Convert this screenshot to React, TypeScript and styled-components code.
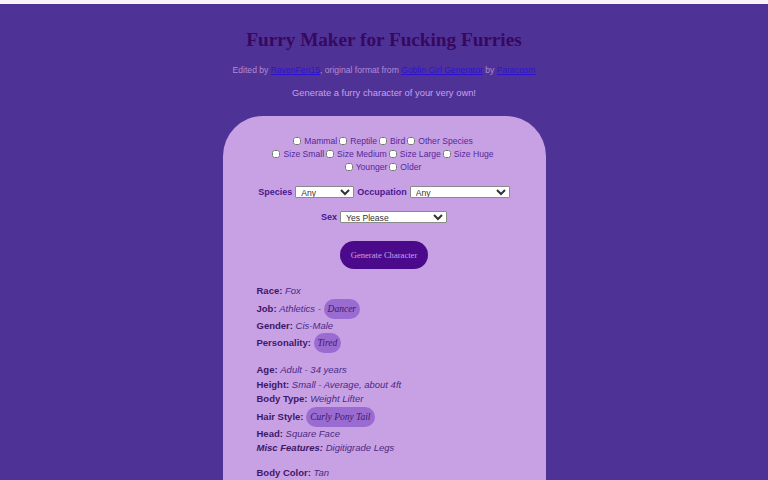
import React from "react";
import styled, { createGlobalStyle } from "styled-components";

const Global = createGlobalStyle`
  html, body { margin: 0; padding: 0; background: #4f3296; }
  body { font-family: "Liberation Sans", Arial, sans-serif; }
`;

const Page = styled.div`
  border-top: 4px solid #f8f3f8;
  background: #4f3296;
  min-height: 476px;
  display: flex;
  flex-direction: column;
  align-items: center;
`;

const Title = styled.h1`
  margin: 25px 0 0;
  font-family: "Liberation Serif", "Times New Roman", serif;
  font-size: 19.2px;
  line-height: 22px;
  font-weight: bold;
  color: #36085e;
`;

const Credits = styled.p`
  margin: 14px 0 0;
  font-size: 8.6px;
  line-height: 10px;
  color: #b08ad8;
`;

const Link = styled.a`
  color: #2c12d2;
  text-decoration: underline;
`;

const Tagline = styled.p`
  margin: 12px 0 0;
  font-size: 9.4px;
  line-height: 12px;
  color: #c7a0ea;
`;

const Card = styled.main`
  margin-top: 17px;
  width: 323px;
  background: #c8a0e4;
  border-radius: 40px 40px 0 0;
  padding: 19px 0 40px;
  box-sizing: border-box;
  display: flex;
  flex-direction: column;
  align-items: center;
`;

const CheckLine = styled.div`
  display: flex;
  align-items: center;
  justify-content: center;
  height: 12.7px;
  font-size: 8.6px;
  color: #55289a;
`;

const CheckItem = styled.label`
  display: inline-flex;
  align-items: center;
  margin-right: 2px;
`;

const Box = styled.input`
  width: 8px;
  height: 8px;
  margin: 0 3px 0 0;
`;

const SelectRow = styled.div<{ $top: number }>`
  margin-top: ${(p) => p.$top}px;
  display: flex;
  align-items: center;
  justify-content: center;
  gap: 3px;
  font-size: 9px;
`;

const SelLabel = styled.span`
  font-weight: bold;
  color: #4a1890;
`;

const Select = styled.select<{ $w: number }>`
  width: ${(p) => p.$w}px;
  height: 12px;
  font-family: "Liberation Sans", Arial, sans-serif;
  font-size: 8.6px;
  padding: 0 0 0 1px;
  border: 1px solid #8a8a8a;
  border-radius: 1px;
  background: #fff;
  color: #333;
`;

const Button = styled.button`
  margin-top: 18px;
  width: 88px;
  height: 28px;
  border: none;
  border-radius: 14px;
  background: #4b0a8c;
  color: #c8a0e4;
  font-family: "Liberation Serif", "Times New Roman", serif;
  font-size: 8.6px;
`;

const Results = styled.section`
  align-self: stretch;
  padding: 15px 34px 0;
`;

const Group = styled.div`
  & + & { margin-top: 10px; }
`;

const Line = styled.div`
  font-size: 9.5px;
  line-height: 14.5px;
  color: #4a2a86;
`;

const Label = styled.b<{ $italic?: boolean }>`
  color: #3c1868;
  font-style: ${(p) => (p.$italic ? "italic" : "normal")};
`;

const Value = styled.i``;

const Pill = styled.span`
  display: inline-block;
  vertical-align: middle;
  font-family: "Liberation Serif", "Times New Roman", serif;
  font-style: italic;
  font-size: 9.5px;
  line-height: 10px;
  padding: 5px 4px;
  border-radius: 10px;
  background: #9a6bd0;
  color: #3a1a70;
`;

const checks = [
  ["Mammal", "Reptile", "Bird", "Other Species"],
  ["Size Small", "Size Medium", "Size Large", "Size Huge"],
  ["Younger", "Older"],
];

export default function App() {
  return (
    <Page>
      <Global />
      <Title>Furry Maker for Fucking Furries</Title>
      <Credits>
        Edited by <Link href="#">RavenFen15</Link>, original format from{" "}
        <Link href="#">Goblin Girl Generator</Link> by <Link href="#">Paracosm</Link>
      </Credits>
      <Tagline>Generate a furry character of your very own!</Tagline>
      <Card>
        {checks.map((row, i) => (
          <CheckLine key={i}>
            {row.map((c) => (
              <CheckItem key={c}>
                <Box type="checkbox" />
                {c}
              </CheckItem>
            ))}
          </CheckLine>
        ))}
        <SelectRow $top={13}>
          <SelLabel>Species</SelLabel>
          <Select $w={59}><option>Any</option></Select>
          <SelLabel>Occupation</SelLabel>
          <Select $w={100}><option>Any</option></Select>
        </SelectRow>
        <SelectRow $top={13}>
          <SelLabel>Sex</SelLabel>
          <Select $w={107}><option>Yes Please</option></Select>
        </SelectRow>
        <Button>Generate Character</Button>
        <Results>
          <Group>
            <Line><Label>Race:</Label> <Value>Fox</Value></Line>
            <Line><Label>Job:</Label> <Value>Athletics - </Value><Pill>Dancer</Pill></Line>
            <Line><Label>Gender:</Label> <Value>Cis-Male</Value></Line>
            <Line><Label>Personality:</Label> <Pill>Tired</Pill></Line>
          </Group>
          <Group>
            <Line><Label>Age:</Label> <Value>Adult - 34 years</Value></Line>
            <Line><Label>Height:</Label> <Value>Small - Average, about 4ft</Value></Line>
            <Line><Label>Body Type:</Label> <Value>Weight Lifter</Value></Line>
            <Line><Label>Hair Style:</Label> <Pill>Curly Pony Tail</Pill></Line>
            <Line><Label>Head:</Label> <Value>Square Face</Value></Line>
            <Line><Label $italic>Misc Features:</Label> <Value>Digitigrade Legs</Value></Line>
          </Group>
          <Group>
            <Line><Label>Body Color:</Label> <Value>Tan</Value></Line>
          </Group>
        </Results>
      </Card>
    </Page>
  );
}
